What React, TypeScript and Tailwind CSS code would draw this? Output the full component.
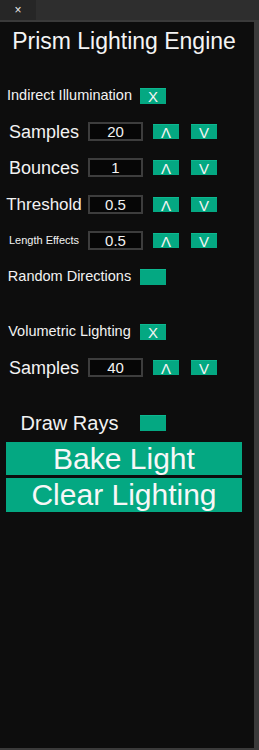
import React from "react";

const font = { fontFamily: '"Liberation Sans", Arial, sans-serif' };

function Input({ value }: { value: string }) {
  return (
    <div className="w-[55px] h-[19px] border-2 border-[#3d3d3d] bg-[#060606] flex items-center justify-center text-[15px] text-[#f2f2f2] leading-none">
      {value}
    </div>
  );
}

function GBtn({ children, className = "" }: { children?: React.ReactNode; className?: string }) {
  return (
    <div
      className={
        "w-[26px] h-[15px] bg-[#04a882] border-t border-[#0cb890] flex items-center justify-center text-[15px] text-[#f4f4f4] leading-none " +
        className
      }
    >
      {children}
    </div>
  );
}

function NumRow({ label, value, labelClass }: { label: string; value: string; labelClass: string }) {
  return (
    <div className="h-[19px] flex items-center">
      <div className={"w-[88px] text-center whitespace-nowrap leading-none text-[#f2f2f2] " + labelClass}>{label}</div>
      <Input value={value} />
      <GBtn className="ml-[10px]">Λ</GBtn>
      <GBtn className="ml-[12px]">V</GBtn>
    </div>
  );
}

function ToggleRow({ label, on, labelClass }: { label: string; on?: boolean; labelClass: string }) {
  return (
    <div className="h-[19px] flex items-center">
      <div className={"w-[139px] text-center whitespace-nowrap leading-none text-[#f2f2f2] " + labelClass}>{label}</div>
      <GBtn className="ml-[1px] h-[16px]">{on ? "X" : ""}</GBtn>
    </div>
  );
}

export default function App() {
  return (
    <div style={font} className="w-[259px] h-[750px] bg-[#3a3a3a] flex flex-col overflow-hidden">
      <div className="h-[20px] bg-[#2e2e2e] flex shrink-0">
        <div className="w-[36px] h-[20px] bg-[#262626] flex items-center justify-center text-[#e8e8e8] text-[12px] leading-none">
          ×
        </div>
      </div>
      <div className="h-[2px] bg-[#3a3a3a] shrink-0" />
      <div className="w-[254px] h-[726px] bg-[#0d0d0d] flex flex-col">
        <div className="mt-[6px] h-[26px] flex items-center justify-center text-[23px] text-[#f4f4f4] leading-none pr-[6px]">
          Prism Lighting Engine
        </div>
        <div className="mt-[32px]">
          <ToggleRow label="Indirect Illumination" on labelClass="text-[14.5px]" />
        </div>
        <div className="mt-[17px]">
          <NumRow label="Samples" value="20" labelClass="text-[18px]" />
        </div>
        <div className="mt-[17px]">
          <NumRow label="Bounces" value="1" labelClass="text-[18px]" />
        </div>
        <div className="mt-[18px]">
          <NumRow label="Threshold" value="0.5" labelClass="text-[17px]" />
        </div>
        <div className="mt-[17px]">
          <NumRow label="Length Effects" value="0.5" labelClass="text-[11px]" />
        </div>
        <div className="mt-[17px]">
          <ToggleRow label="Random Directions" labelClass="text-[14.5px]" />
        </div>
        <div className="mt-[36px]">
          <ToggleRow label="Volumetric Lighting" on labelClass="text-[14.5px]" />
        </div>
        <div className="mt-[17px]">
          <NumRow label="Samples" value="40" labelClass="text-[18px]" />
        </div>
        <div className="mt-[36px]">
          <ToggleRow label="Draw Rays" labelClass="text-[20px]" />
        </div>
        <div className="mt-[10px] ml-[6px] w-[236px] h-[33px] bg-[#04a882] flex items-center justify-center text-[30px] text-[#f7f7f7] leading-none">
          Bake Light
        </div>
        <div className="mt-[3px] ml-[6px] w-[236px] h-[34px] bg-[#04a882] flex items-center justify-center text-[30px] text-[#f7f7f7] leading-none">
          Clear Lighting
        </div>
      </div>
    </div>
  );
}
